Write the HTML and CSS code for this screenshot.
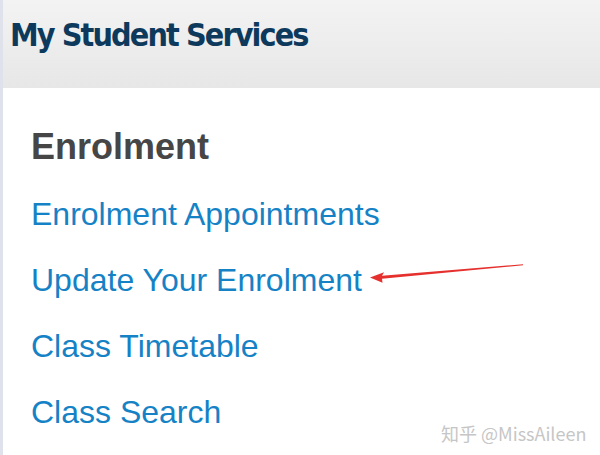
FILE: index.html
```html
<!DOCTYPE html>
<html lang="en">
<head>
    <meta charset="UTF-8">
    <meta name="viewport" content="width=device-width, initial-scale=1.0">
    <title>My Student Services</title>
    <link rel="stylesheet" href="styles.css">
</head>
<body>
    <div class="page">
        <div class="header">
            <h1>My Student Services</h1>
        </div>

        <div class="content">
            <h2 class="section-title">Enrolment</h2>
            <ul class="links">
                <li><a href="#">Enrolment Appointments</a></li>
                <li><a href="#">Update Your Enrolment</a></li>
                <li><a href="#">Class Timetable</a></li>
                <li><a href="#">Class Search</a></li>
            </ul>
        </div>

        <!-- red annotation arrow -->
        <svg class="arrow" width="170" height="30" viewBox="0 0 170 30">
            <polygon points="10,19.5 24,14.2 22,17.8 163,6.2 163,7.2 22,20.8 22.5,24.8" fill="#e5302e"/>
        </svg>

        <div class="watermark">知乎 @MissAileen</div>
    </div>
</body>
</html>
```

FILE: styles.css
```css
* {
    box-sizing: border-box;
    margin: 0;
    padding: 0;
}

body {
    background: white;
    font-family: "Liberation Sans", Arial, sans-serif;
}

.page {
    position: relative;
    height: 455px;
    border-left: 3px solid #dfe2ea;
    overflow: hidden;
}

.header {
    height: 88px;
    padding: 17px 0 0 7px;
    background: linear-gradient(180deg, #f3f3f3 0%, #e7e7e7 100%);
}

.header h1 {
    font-family: "DejaVu Sans Condensed", "DejaVu Sans", sans-serif;
    font-stretch: condensed;
    font-size: 32px;
    line-height: 36px;
    font-weight: bold;
    letter-spacing: -1.9px;
    color: #0d3a5c;
}

.content {
    padding: 39px 0 0 28px;
}

.section-title {
    font-size: 36px;
    line-height: 40px;
    font-weight: bold;
    color: #464646;
    margin-bottom: 14px;
}

.links {
    list-style: none;
}

.links li {
    font-size: 32px;
    line-height: 66px;
}

.links a {
    color: #1682c6;
    text-decoration: none;
}

.arrow {
    position: absolute;
    left: 357px;
    top: 258px;
}

.watermark {
    position: absolute;
    left: 438px;
    top: 420px;
    font-family: "Noto Sans CJK SC", "Noto Sans", sans-serif;
    font-size: 18px;
    color: #c6c6c6;
    text-shadow: 0 0 1px #fff;
}
```
